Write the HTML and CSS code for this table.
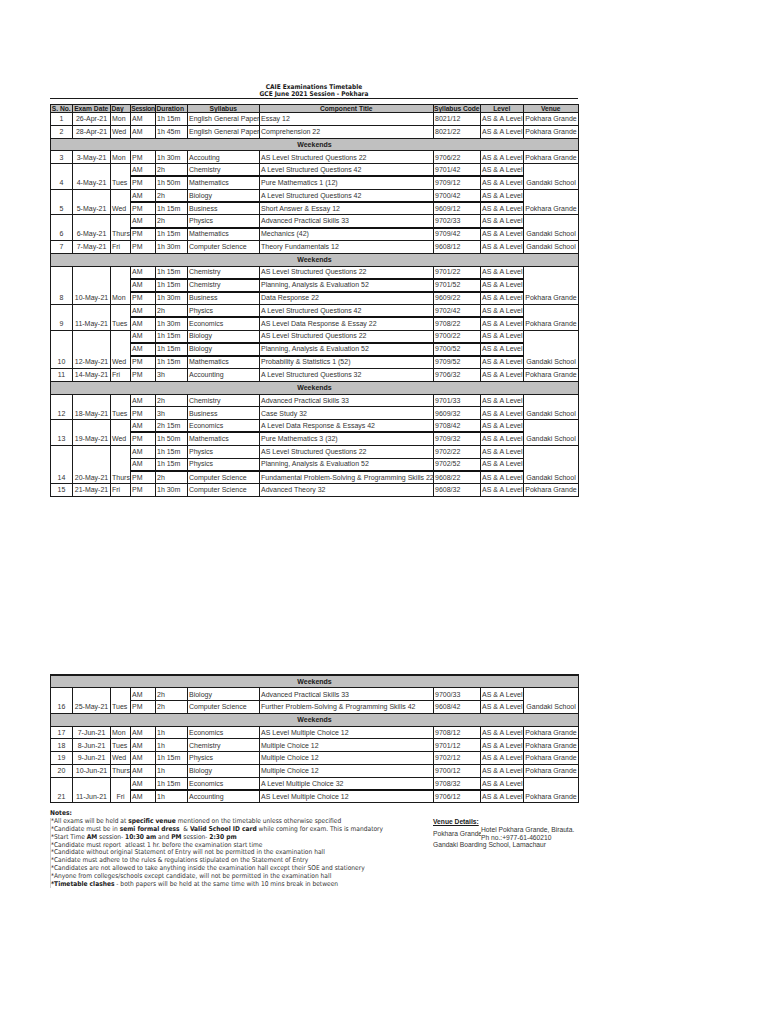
FILE: index.html
```html
<!DOCTYPE html>
<html>
<head>
<meta charset="utf-8">
<link rel="stylesheet" href="styles.css">
</head>
<body>
<div class="page">
  <div class="title">
    <div class="t1">CAIE Examinations Timetable</div>
    <div class="t2">GCE June 2021 Session - Pokhara</div>
  </div>
  <div class="rule"></div>
  <table class="tt t-first">
    <colgroup>
      <col class="w1"><col class="w2"><col class="w3"><col class="w4"><col class="w5"><col class="w6"><col class="w7"><col class="w8"><col class="w9"><col class="w10">
    </colgroup>
    <tr class="hd">
      <th class="c">S. No.</th><th class="c">Exam Date</th><th>Day</th><th class="c sq">Session</th><th>Duration</th><th class="c">Syllabus</th><th class="c">Component Title</th><th class="sc">Syllabus Code</th><th class="c">Level</th><th class="c">Venue</th>
    </tr>
    <tr><td class="c">1</td><td class="c">26-Apr-21</td><td>Mon</td><td>AM</td><td>1h 15m</td><td>English General Paper</td><td>Essay 12</td><td>8021/12</td><td>AS &amp; A Level</td><td class="c">Pokhara Grande</td></tr>
    <tr><td class="c">2</td><td class="c">28-Apr-21</td><td>Wed</td><td>AM</td><td>1h 45m</td><td>English General Paper</td><td>Comprehension 22</td><td>8021/22</td><td>AS &amp; A Level</td><td class="c">Pokhara Grande</td></tr>
    <tr class="wk"><td colspan="10">Weekends</td></tr>
    <tr><td class="c">3</td><td class="c">3-May-21</td><td>Mon</td><td>PM</td><td>1h 30m</td><td>Accouting</td><td>AS Level Structured Questions 22</td><td>9706/22</td><td>AS &amp; A Level</td><td class="c">Pokhara Grande</td></tr>
    <tr class="tk"><td class="m c" rowspan="2">4</td><td class="m c" rowspan="2">4-May-21</td><td class="m" rowspan="2">Tues</td><td>AM</td><td>2h</td><td>Chemistry</td><td>A Level Structured Questions 42</td><td>9701/42</td><td>AS &amp; A Level</td><td class="m c" rowspan="2">Gandaki School</td></tr>
    <tr><td>PM</td><td>1h 50m</td><td>Mathematics</td><td>Pure Mathematics 1 (12)</td><td>9709/12</td><td>AS &amp; A Level</td></tr>
    <tr class="tk"><td class="m c" rowspan="2">5</td><td class="m c" rowspan="2">5-May-21</td><td class="m" rowspan="2">Wed</td><td>AM</td><td>2h</td><td>Biology</td><td>A Level Structured Questions 42</td><td>9700/42</td><td>AS &amp; A Level</td><td class="m c" rowspan="2">Pokhara Grande</td></tr>
    <tr><td>PM</td><td>1h 15m</td><td>Business</td><td>Short Answer &amp; Essay 12</td><td>9609/12</td><td>AS &amp; A Level</td></tr>
    <tr class="tk"><td class="m c" rowspan="2">6</td><td class="m c" rowspan="2">6-May-21</td><td class="m" rowspan="2">Thurs</td><td>AM</td><td>2h</td><td>Physics</td><td>Advanced Practical Skills 33</td><td>9702/33</td><td>AS &amp; A Level</td><td class="m c" rowspan="2">Gandaki School</td></tr>
    <tr><td>PM</td><td>1h 15m</td><td>Mathematics</td><td>Mechanics (42)</td><td>9709/42</td><td>AS &amp; A Level</td></tr>
    <tr><td class="c">7</td><td class="c">7-May-21</td><td>Fri</td><td>PM</td><td>1h 30m</td><td>Computer Science</td><td>Theory Fundamentals 12</td><td>9608/12</td><td>AS &amp; A Level</td><td class="c">Gandaki School</td></tr>
    <tr class="wk"><td colspan="10">Weekends</td></tr>
    <tr class="tk"><td class="m c" rowspan="3">8</td><td class="m c" rowspan="3">10-May-21</td><td class="m" rowspan="3">Mon</td><td>AM</td><td>1h 15m</td><td>Chemistry</td><td>AS Level Structured Questions 22</td><td>9701/22</td><td>AS &amp; A Level</td><td class="m c" rowspan="3">Pokhara Grande</td></tr>
    <tr class="tk"><td>AM</td><td>1h 15m</td><td>Chemistry</td><td>Planning, Analysis &amp; Evaluation 52</td><td>9701/52</td><td>AS &amp; A Level</td></tr>
    <tr><td>PM</td><td>1h 30m</td><td>Business</td><td>Data Response 22</td><td>9609/22</td><td>AS &amp; A Level</td></tr>
    <tr class="tk"><td class="m c" rowspan="2">9</td><td class="m c" rowspan="2">11-May-21</td><td class="m" rowspan="2">Tues</td><td>AM</td><td>2h</td><td>Physics</td><td>A Level Structured Questions 42</td><td>9702/42</td><td>AS &amp; A Level</td><td class="m c" rowspan="2">Pokhara Grande</td></tr>
    <tr><td>AM</td><td>1h 30m</td><td>Economics</td><td>AS Level Data Response &amp; Essay 22</td><td>9708/22</td><td>AS &amp; A Level</td></tr>
    <tr class="tk"><td class="m c" rowspan="3">10</td><td class="m c" rowspan="3">12-May-21</td><td class="m" rowspan="3">Wed</td><td>AM</td><td>1h 15m</td><td>Biology</td><td>AS Level Structured Questions 22</td><td>9700/22</td><td>AS &amp; A Level</td><td class="m c" rowspan="3">Gandaki School</td></tr>
    <tr class="tk"><td>AM</td><td>1h 15m</td><td>Biology</td><td>Planning, Analysis &amp; Evaluation 52</td><td>9700/52</td><td>AS &amp; A Level</td></tr>
    <tr><td>PM</td><td>1h 15m</td><td>Mathematics</td><td>Probability &amp; Statistics 1 (52)</td><td>9709/52</td><td>AS &amp; A Level</td></tr>
    <tr><td class="c">11</td><td class="c">14-May-21</td><td>Fri</td><td>PM</td><td>3h</td><td>Accounting</td><td>A Level Structured Questions 32</td><td>9706/32</td><td>AS &amp; A Level</td><td class="c">Pokhara Grande</td></tr>
    <tr class="wk"><td colspan="10">Weekends</td></tr>
    <tr><td class="m c" rowspan="2">12</td><td class="m c" rowspan="2">18-May-21</td><td class="m" rowspan="2">Tues</td><td>AM</td><td>2h</td><td>Chemistry</td><td>Advanced Practical Skills 33</td><td>9701/33</td><td>AS &amp; A Level</td><td class="m c" rowspan="2">Gandaki School</td></tr>
    <tr><td>PM</td><td>3h</td><td>Business</td><td>Case Study 32</td><td>9609/32</td><td>AS &amp; A Level</td></tr>
    <tr class="tk"><td class="m c" rowspan="2">13</td><td class="m c" rowspan="2">19-May-21</td><td class="m" rowspan="2">Wed</td><td>AM</td><td>2h 15m</td><td>Economics</td><td>A Level Data Response &amp; Essays 42</td><td>9708/42</td><td>AS &amp; A Level</td><td class="m c" rowspan="2">Gandaki School</td></tr>
    <tr><td>PM</td><td>1h 50m</td><td>Mathematics</td><td>Pure Mathematics 3 (32)</td><td>9709/32</td><td>AS &amp; A Level</td></tr>
    <tr><td class="m c" rowspan="3">14</td><td class="m c" rowspan="3">20-May-21</td><td class="m" rowspan="3">Thurs</td><td>AM</td><td>1h 15m</td><td>Physics</td><td>AS Level Structured Questions 22</td><td>9702/22</td><td>AS &amp; A Level</td><td class="m c" rowspan="3">Gandaki School</td></tr>
    <tr class="tk"><td>AM</td><td>1h 15m</td><td>Physics</td><td>Planning, Analysis &amp; Evaluation 52</td><td>9702/52</td><td>AS &amp; A Level</td></tr>
    <tr><td>PM</td><td>2h</td><td>Computer Science</td><td>Fundamental Problem-Solving &amp; Programming Skills 22</td><td>9608/22</td><td>AS &amp; A Level</td></tr>
    <tr><td class="c">15</td><td class="c">21-May-21</td><td>Fri</td><td>PM</td><td>1h 30m</td><td>Computer Science</td><td>Advanced Theory 32</td><td>9608/32</td><td>AS &amp; A Level</td><td class="c">Pokhara Grande</td></tr>
  </table>

  <table class="tt t-second">
    <colgroup>
      <col class="w1"><col class="w2"><col class="w3"><col class="w4"><col class="w5"><col class="w6"><col class="w7"><col class="w8"><col class="w9"><col class="w10">
    </colgroup>
    <tr class="wk"><td colspan="10">Weekends</td></tr>
    <tr><td class="m c" rowspan="2">16</td><td class="m c" rowspan="2">25-May-21</td><td class="m" rowspan="2">Tues</td><td>AM</td><td>2h</td><td>Biology</td><td>Advanced Practical Skills 33</td><td>9700/33</td><td>AS &amp; A Level</td><td class="m c" rowspan="2">Gandaki School</td></tr>
    <tr><td>PM</td><td>2h</td><td>Computer Science</td><td>Further Problem-Solving &amp; Programming Skills 42</td><td>9608/42</td><td>AS &amp; A Level</td></tr>
    <tr class="wk"><td colspan="10">Weekends</td></tr>
    <tr><td class="c">17</td><td class="c">7-Jun-21</td><td>Mon</td><td>AM</td><td>1h</td><td>Economics</td><td>AS Level Multiple Choice 12</td><td>9708/12</td><td>AS &amp; A Level</td><td class="c">Pokhara Grande</td></tr>
    <tr><td class="c">18</td><td class="c">8-Jun-21</td><td>Tues</td><td>AM</td><td>1h</td><td>Chemistry</td><td>Multiple Choice 12</td><td>9701/12</td><td>AS &amp; A Level</td><td class="c">Pokhara Grande</td></tr>
    <tr><td class="c">19</td><td class="c">9-Jun-21</td><td>Wed</td><td>AM</td><td>1h 15m</td><td>Physics</td><td>Multiple Choice 12</td><td>9702/12</td><td>AS &amp; A Level</td><td class="c">Pokhara Grande</td></tr>
    <tr><td class="c">20</td><td class="c">10-Jun-21</td><td>Thurs</td><td>AM</td><td>1h</td><td>Biology</td><td>Multiple Choice 12</td><td>9700/12</td><td>AS &amp; A Level</td><td class="c">Pokhara Grande</td></tr>
    <tr class="tk"><td class="m c" rowspan="2">21</td><td class="m c" rowspan="2">11-Jun-21</td><td class="m c" rowspan="2">Fri</td><td>AM</td><td>1h 15m</td><td>Economics</td><td>A Level Multiple Choice 32</td><td>9708/32</td><td>AS &amp; A Level</td><td class="m c" rowspan="2">Pokhara Grande</td></tr>
    <tr><td>AM</td><td>1h</td><td>Accounting</td><td>AS Level Multiple Choice 12</td><td>9706/12</td><td>AS &amp; A Level</td></tr>
  </table>

  <div class="foot">
    <div class="notes">
      <div class="nh">Notes:</div>
      <div class="nl">
        <div>*All exams will be held at <b>specific venue</b> mentioned on the timetable unless otherwise specified</div>
        <div>*Candidate must be in <b>semi formal dress</b> &nbsp;&amp; <b>Valid School ID card</b> while coming for exam. This is mandatory</div>
        <div>*Start Time <b>AM</b> session- <b>10:30 am</b> and <b>PM</b> session- <b>2:30 pm</b></div>
        <div>*Candidate must report &nbsp;atleast 1 hr. before the examination start time</div>
        <div>*Candidate without original Statement of Entry will not be permitted in the examination hall</div>
        <div>*Canidate must adhere to the rules &amp; regulations stipulated on the Statement of Entry</div>
        <div>*Candidates are not allowed to take anything inside the examination hall except their SOE and stationery</div>
        <div>*Anyone from colleges/schools except candidate, will not be permitted in the examination hall</div>
        <div><b>*Timetable clashes</b> - both papers will be held at the same time with 10 mins break in between</div>
      </div>
    </div>
    <div class="venue">
      <div class="vh">Venue Details:</div>
      <div class="vrow">
        <div class="vname">Pokhara Grande</div>
        <div class="vaddr">
          <div>Hotel Pokhara Grande, Birauta.</div>
          <div>Ph no.:+977-61-460210</div>
        </div>
      </div>
      <div class="vline">Gandaki Boarding School, Lamachaur</div>
    </div>
  </div>
</div>
</body>
</html>
```

FILE: styles.css
```css
* { box-sizing: border-box; }
html, body { margin: 0; padding: 0; background: #ffffff; }
body {
  font-family: "Liberation Sans", Arial, sans-serif;
  color: #333333;
}
.page {
  width: 768px;
  height: 1024px;
  padding: 84px 0 0 50px;
}
.title {
  width: 528px;
  font-family: "DejaVu Sans Condensed", "DejaVu Sans", sans-serif;
  font-stretch: condensed;
  font-weight: bold;
  font-size: 6.5px;
  line-height: 7px;
  text-align: center;
  color: #1a1a1a;
}
.rule {
  width: 528px;
  height: 1.5px;
  background: #1a1a1a;
  margin-top: -0.5px;
}
.tt {
  width: 528px;
  border-collapse: collapse;
  table-layout: fixed;
  font-size: 7px;
  border: 1px solid #1a1a1a;
}
.t-first { margin-top: 5px; }
.t-second { margin-top: 177px; border-top: 2px solid #1a1a1a; }
.w1 { width: 22px; }
.w2 { width: 38px; }
.w3 { width: 20px; }
.w4 { width: 25px; }
.w5 { width: 32px; }
.w6 { width: 72px; }
.w7 { width: 174px; }
.w8 { width: 47px; }
.w9 { width: 43px; }
.w10 { width: 55px; }
.tt td, .tt th {
  border: 1px solid #1a1a1a;
  padding: 0 0 1.5px 1px;
  height: 12.8px;
  line-height: 8px;
  white-space: nowrap;
  overflow: visible;
  vertical-align: bottom;
  text-align: left;
  font-weight: normal;
}
.tt th {
  height: 8px;
  padding: 0 0.5px;
  font-size: 6.7px;
  line-height: 7px;
  vertical-align: middle;
  background: #c0c0c0;
  font-weight: bold;
  color: #1a1a1a;
}
.tt th.sq { letter-spacing: -0.3px; padding: 0; }
.tt th.sc { padding: 0; letter-spacing: -0.05px; }
.tt .c { text-align: center; padding-left: 0; }
.tt .tk td:not(.m) { border-bottom: 2px solid #111111; }
.tt .wk td {
  background: #c0c0c0;
  font-weight: bold;
  text-align: center;
  color: #1a1a1a;
  padding-left: 0;
}
.foot {
  display: grid;
  grid-template-columns: 383px 1fr;
  margin-top: 7px;
}
.notes {
  font-family: "DejaVu Sans Condensed", "DejaVu Sans", sans-serif;
  font-stretch: condensed;
  font-size: 6.6px;
  line-height: 7.8px;
  color: #333333;
  white-space: nowrap;
}
.notes b, .nh { font-weight: bold; color: #1a1a1a; }
.nl { border-left: 1px solid #d0d0d0; }
.venue {
  padding-top: 8px;
  font-size: 6.7px;
  line-height: 7.6px;
  color: #333333;
  white-space: nowrap;
}
.vh {
  font-weight: bold;
  text-decoration: underline;
  color: #1a1a1a;
}
.vrow {
  display: grid;
  grid-template-columns: 48px auto;
  align-items: center;
}
.vname { overflow: hidden; }
```
